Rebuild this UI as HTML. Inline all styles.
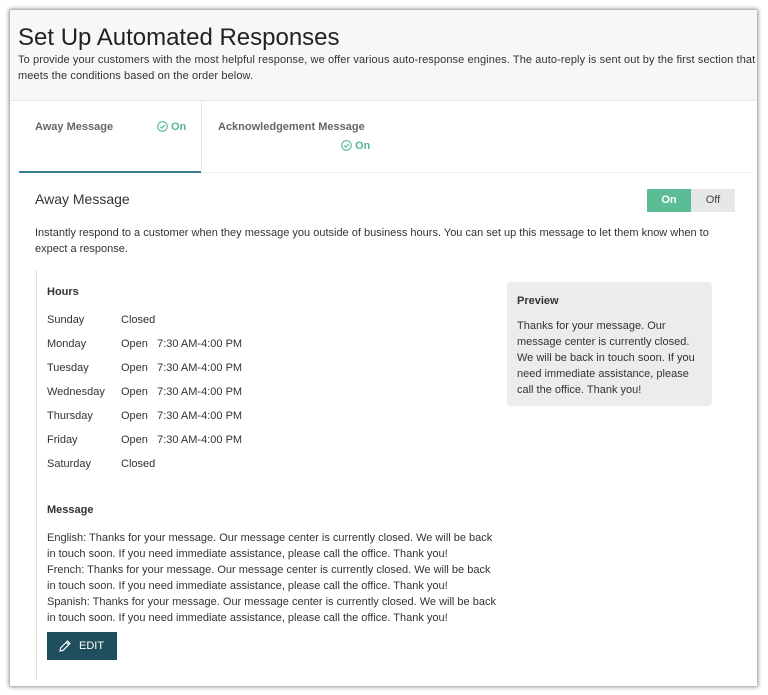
<!DOCTYPE html><html><head><style>
body{margin:0;background:#fff;font-family:"Liberation Sans",sans-serif;color:#333;width:768px;height:695px;overflow:hidden;position:relative}
.card{position:absolute;left:10px;top:10px;width:747px;height:676px;background:#fff;box-shadow:0 0 4px 1px rgba(0,0,0,.45)}
.hdr{position:absolute;left:0;top:0;width:747px;height:90px;background:#f6f7f7;border-bottom:1px solid #e8e8e8}
.a{position:absolute;white-space:nowrap}
h1{position:absolute;left:8px;top:14px;margin:0;font-weight:normal;font-size:24px;color:#222}
.p{font-size:11px;line-height:16px;color:#333}
.g{color:#52b990;font-weight:bold;font-size:11px}
.g svg{vertical-align:-2px;margin-right:3px}
.tab{font-size:11px;font-weight:bold;color:#666}
.row span{position:absolute}
</style></head><body><div class="card">
<div class="hdr"></div>
<h1>Set Up Automated Responses</h1>
<div class="a p" style="left:8px;top:42px;width:740px;white-space:normal;letter-spacing:0.1px">To provide your customers with the most helpful response, we offer various auto-response engines. The auto-reply is sent out by the first section that meets the conditions based on the order below.</div>
<div class="a" style="left:191px;top:91px;width:1px;height:71px;background:#e8e8e8"></div>
<div class="a" style="left:9px;top:161px;width:182px;height:2px;background:#3c7e91"></div>
<div class="a" style="left:191px;top:162px;width:550px;height:1px;background:#eee"></div>
<div class="a tab" style="left:25px;top:111px">Away Message</div>
<div class="a g" style="left:147px;top:111px"><svg width="11" height="11" viewBox="0 0 12 12" fill="none" stroke="#52b990" stroke-width="1.2"><circle cx="6" cy="6" r="5.2"/><path d="M3.5 6.2l1.7 1.7 3.3-3.5"/></svg>On</div>
<div class="a tab" style="left:208px;top:111px">Acknowledgement Message</div>
<div class="a g" style="left:331px;top:130px"><svg width="11" height="11" viewBox="0 0 12 12" fill="none" stroke="#52b990" stroke-width="1.2"><circle cx="6" cy="6" r="5.2"/><path d="M3.5 6.2l1.7 1.7 3.3-3.5"/></svg>On</div>
<div class="a" style="left:25px;top:181px;font-size:14px;color:#333">Away Message</div>
<div class="a" style="left:637px;top:179px;width:44px;height:23px;background:#5bbd95;color:#fff;font-size:11px;font-weight:bold;text-align:center;line-height:23px">On</div>
<div class="a" style="left:681px;top:179px;width:44px;height:23px;background:#e6e7e7;color:#444;font-size:11px;text-align:center;line-height:23px">Off</div>
<div class="a p" style="left:25px;top:215px;width:700px;white-space:normal">Instantly respond to a customer when they message you outside of business hours. You can set up this message to let them know when to expect a response.</div>
<div class="a" style="left:26px;top:260px;width:1px;height:410px;background:#ddd"></div>
<div class="a" style="left:37px;top:276px;font-size:11px;font-weight:bold">Hours</div>
<div class="a p row" style="left:37px;top:302px;width:300px;height:160px">
<span style="top:0">Sunday</span><span style="top:0;left:74px">Closed</span>
<span style="top:24px">Monday</span><span style="top:24px;left:74px">Open&nbsp;&nbsp;&nbsp;7:30 AM-4:00 PM</span>
<span style="top:48px">Tuesday</span><span style="top:48px;left:74px">Open&nbsp;&nbsp;&nbsp;7:30 AM-4:00 PM</span>
<span style="top:72px">Wednesday</span><span style="top:72px;left:74px">Open&nbsp;&nbsp;&nbsp;7:30 AM-4:00 PM</span>
<span style="top:96px">Thursday</span><span style="top:96px;left:74px">Open&nbsp;&nbsp;&nbsp;7:30 AM-4:00 PM</span>
<span style="top:120px">Friday</span><span style="top:120px;left:74px">Open&nbsp;&nbsp;&nbsp;7:30 AM-4:00 PM</span>
<span style="top:144px">Saturday</span><span style="top:144px;left:74px">Closed</span></div>
<div class="a" style="left:37px;top:494px;font-size:11px;font-weight:bold">Message</div>
<div class="a p" style="left:37px;top:520px;width:450px;white-space:normal">English: Thanks for your message. Our message center is currently closed. We will be back in touch soon. If you need immediate assistance, please call the office. Thank you!<br>French: Thanks for your message. Our message center is currently closed. We will be back in touch soon. If you need immediate assistance, please call the office. Thank you!<br>Spanish: Thanks for your message. Our message center is currently closed. We will be back in touch soon. If you need immediate assistance, please call the office. Thank you!</div>
<div class="a" style="left:37px;top:622px;width:70px;height:28px;background:#1f4e5c;color:#fff;font-size:11px;line-height:28px">
<svg style="position:absolute;left:12px;top:8px" width="12" height="12" viewBox="0 0 12 12" fill="none" stroke="#fff" stroke-width="1.2"><path d="M1 11l.6-3L8.5 1.1l2.4 2.4L4 10.4z M7.3 2.3l2.4 2.4"/></svg>
<span style="position:absolute;left:32px">EDIT</span></div>
<div class="a" style="left:497px;top:272px;width:205px;height:124px;background:#ebecec;border-radius:4px"></div>
<div class="a" style="left:507px;top:285px;font-size:11px;font-weight:bold">Preview</div>
<div class="a p" style="left:507px;top:308px;width:190px;white-space:normal">Thanks for your message. Our message center is currently closed. We will be back in touch soon. If you need immediate assistance, please call the office. Thank you!</div>
</div></body></html>
